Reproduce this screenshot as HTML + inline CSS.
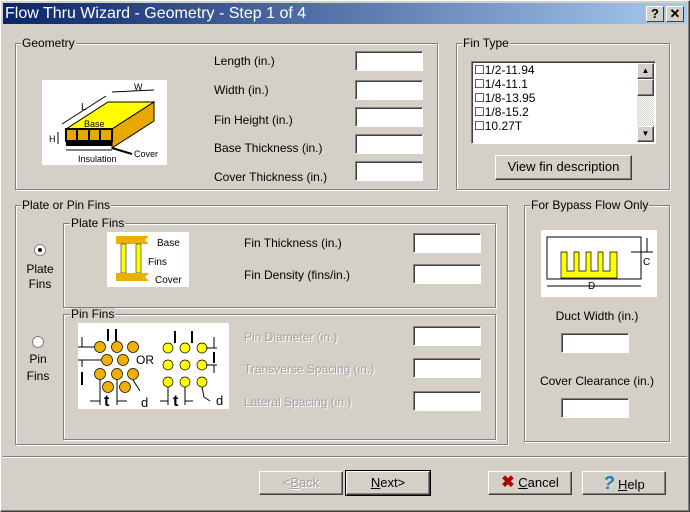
<!DOCTYPE html>
<html><head><meta charset="utf-8"><style>
*{box-sizing:border-box;margin:0;padding:0}
body{width:690px;height:512px;background:#d4d0c8;font-family:"Liberation Sans",sans-serif;font-size:12px;color:#000;position:relative;overflow:hidden}
.a{position:absolute}
.win{left:0;top:0;width:690px;height:512px;border:1px solid #fff;border-right-color:#404040;border-bottom-color:#404040;box-shadow:inset -1px -1px #808080}
.title{left:3px;top:3px;width:684px;height:21px;background:linear-gradient(90deg,#0a246a,#a6caf0);color:#fff;font-size:16px;line-height:21px;padding-left:2px}
.tb{top:6px;width:18px;height:16px;background:#d4d0c8;border:1px solid #fff;border-right-color:#404040;border-bottom-color:#404040;font-weight:bold;font-size:13px;text-align:center;line-height:14px;color:#000}
.grp{border:1px solid #808080;box-shadow:1px 1px 0 #fff,inset 1px 1px 0 #fff}
.lbl{background:#d4d0c8;padding:0 1px;line-height:13px}
.in{background:#fff;border:1px solid #808080;border-right-color:#fff;border-bottom-color:#fff;box-shadow:inset 1px 1px #404040}
.dis{color:#a0a0a0;text-shadow:1px 1px #fff}
.btn{border:1px solid #fff;border-right-color:#404040;border-bottom-color:#404040;box-shadow:inset -1px -1px #808080;text-align:center;line-height:22px;font-size:13px}
.white{background:#fff}
</style></head><body>
<div class="a win"></div>
<div class="a title">Flow Thru Wizard - Geometry - Step 1 of 4</div>
<div class="a tb" style="left:646px">?</div>
<div class="a tb" style="left:666px">✕</div>

<div class="a grp" style="left:15px;top:43px;width:423px;height:147px"></div>
<div class="a lbl" style="left:21px;top:37px">Geometry</div>
<div class="a white" style="left:42px;top:80px;width:125px;height:85px">
<svg width="125" height="85" viewBox="0 0 125 85">
<polygon points="24,49 66,22 112,22 70,49" fill="#ff0" stroke="#000"/>
<polygon points="70,49 112,22 112,41 70,68" fill="#e8a800" stroke="#000"/>
<rect x="24" y="49" width="46" height="12" fill="#e8a800" stroke="#000" stroke-width="2"/>
<rect x="24" y="61" width="46" height="5" fill="#000"/>
<line x1="35" y1="49" x2="35" y2="61" stroke="#000" stroke-width="2"/><line x1="47" y1="49" x2="47" y2="61" stroke="#000" stroke-width="2"/><line x1="58" y1="49" x2="58" y2="61" stroke="#000" stroke-width="2"/>
<line x1="20" y1="44" x2="64" y2="16" stroke="#000"/><line x1="70" y1="12" x2="112" y2="10" stroke="#000"/>
<text x="39" y="30" font-size="10" font-family="Liberation Sans">L</text>
<text x="92" y="10" font-size="9" font-family="Liberation Sans">W</text>
<text x="42" y="47" font-size="9" font-family="Liberation Sans">Base</text>
<text x="7" y="62" font-size="9" font-family="Liberation Sans">H</text>
<line x1="16" y1="52" x2="16" y2="64" stroke="#000"/>
<line x1="24" y1="70" x2="70" y2="70" stroke="#000"/>
<line x1="70" y1="68" x2="90" y2="74" stroke="#000" stroke-width="2"/>
<text x="92" y="77" font-size="9" font-family="Liberation Sans">Cover</text>
<text x="36" y="82" font-size="9" font-family="Liberation Sans">Insulation</text>
</svg></div>
<div class="a" style="left:214px;top:54px">Length (in.)</div>
<div class="a" style="left:214px;top:83px">Width (in.)</div>
<div class="a" style="left:214px;top:113px">Fin Height (in.)</div>
<div class="a" style="left:214px;top:141px">Base Thickness (in.)</div>
<div class="a" style="left:214px;top:170px">Cover Thickness (in.)</div>
<div class="a in" style="left:355px;top:51px;width:68px;height:20px"></div>
<div class="a in" style="left:355px;top:80px;width:68px;height:20px"></div>
<div class="a in" style="left:355px;top:107px;width:68px;height:20px"></div>
<div class="a in" style="left:355px;top:134px;width:68px;height:20px"></div>
<div class="a in" style="left:355px;top:161px;width:68px;height:20px"></div>

<div class="a grp" style="left:456px;top:43px;width:214px;height:147px"></div>
<div class="a lbl" style="left:462px;top:37px">Fin Type</div>
<div class="a in" style="left:471px;top:61px;width:185px;height:83px"></div>
<div class="a" style="left:474px;top:63px;line-height:14px;font-size:12px">
<div>☐1/2-11.94</div><div>☐1/4-11.1</div><div>☐1/8-13.95</div><div>☐1/8-15.2</div><div>☐10.27T</div></div>
<div class="a" style="left:637px;top:63px;width:17px;height:79px;background:repeating-conic-gradient(#fff 0 25%,#d4d0c8 0 50%) 0 0/2px 2px"></div>
<div class="a btn" style="left:637px;top:63px;width:17px;height:16px;background:#d4d0c8;font-size:8px;line-height:14px">▲</div>
<div class="a btn" style="left:637px;top:79px;width:17px;height:17px;background:#d4d0c8"></div>
<div class="a btn" style="left:637px;top:126px;width:17px;height:16px;background:#d4d0c8;font-size:8px;line-height:14px">▼</div>
<div class="a btn" style="left:495px;top:155px;width:137px;height:25px">View fin description</div>

<div class="a grp" style="left:15px;top:205px;width:493px;height:240px"></div>
<div class="a lbl" style="left:21px;top:199px">Plate or Pin Fins</div>
<div class="a" style="left:34px;top:244px;width:12px;height:12px;border-radius:50%;background:#fff;border:1px solid #808080"><div class="a" style="left:3px;top:3px;width:4px;height:4px;background:#000;border-radius:50%"></div></div>
<div class="a" style="left:22px;top:262px;width:36px;text-align:center;line-height:15px">Plate<br>Fins</div>
<div class="a" style="left:32px;top:336px;width:12px;height:12px;border-radius:50%;background:#fff;border:1px solid #808080"></div>
<div class="a" style="left:20px;top:351px;width:36px;text-align:center;line-height:17px">Pin<br>Fins</div>

<div class="a grp" style="left:63px;top:223px;width:433px;height:85px"></div>
<div class="a lbl" style="left:70px;top:217px">Plate Fins</div>
<div class="a white" style="left:107px;top:232px;width:82px;height:55px">
<svg width="82" height="55"><polygon points="9,4 42,4 38,8 42,12 9,12" fill="#e8b000"/><rect x="14" y="12" width="5" height="29" fill="#ff0" stroke="#000" stroke-width=".5"/><rect x="29" y="12" width="5" height="29" fill="#ff0" stroke="#000" stroke-width=".5"/><polygon points="9,41 42,41 38,45 42,49 9,49" fill="#e8b000"/>
<text x="50" y="14" font-size="10" font-family="Liberation Sans">Base</text><text x="41" y="33" font-size="10" font-family="Liberation Sans">Fins</text><text x="48" y="51" font-size="10" font-family="Liberation Sans">Cover</text></svg></div>
<div class="a" style="left:244px;top:236px">Fin Thickness (in.)</div>
<div class="a" style="left:244px;top:268px">Fin Density (fins/in.)</div>
<div class="a in" style="left:413px;top:233px;width:68px;height:20px"></div>
<div class="a in" style="left:413px;top:264px;width:68px;height:20px"></div>

<div class="a grp" style="left:63px;top:314px;width:433px;height:126px"></div>
<div class="a lbl" style="left:70px;top:308px">Pin Fins</div>
<div class="a white" style="left:78px;top:323px;width:151px;height:86px">
<svg width="151" height="86" font-family="Liberation Sans">
<g fill="#f0b000" stroke="#000" stroke-width=".7">
<circle cx="22" cy="24" r="5.5"/><circle cx="39" cy="24" r="5.5"/><circle cx="55" cy="24" r="5.5"/>
<circle cx="29" cy="37" r="5.5"/><circle cx="45" cy="37" r="5.5"/>
<circle cx="22" cy="51" r="5.5"/><circle cx="39" cy="51" r="5.5"/><circle cx="55" cy="51" r="5.5"/>
<circle cx="30" cy="64" r="5.5"/><circle cx="47" cy="64" r="5.5"/></g>
<g fill="#ff0" stroke="#000" stroke-width=".7">
<circle cx="90" cy="25" r="5"/><circle cx="107" cy="25" r="5"/><circle cx="124" cy="25" r="5"/>
<circle cx="90" cy="42" r="5"/><circle cx="107" cy="42" r="5"/><circle cx="124" cy="42" r="5"/>
<circle cx="90" cy="59" r="5"/><circle cx="107" cy="59" r="5"/><circle cx="124" cy="59" r="5"/></g>
<g stroke="#000" fill="none">
<line x1="30" y1="6" x2="30" y2="18" stroke-width="2"/><line x1="38" y1="6" x2="38" y2="18" stroke-width="2"/>
<line x1="-1" y1="24" x2="16" y2="24"/><line x1="-1" y1="37" x2="23" y2="37"/>
<line x1="4" y1="14" x2="4" y2="24"/><line x1="4" y1="37" x2="4" y2="44"/>
<line x1="4" y1="49" x2="4" y2="62" stroke-width="2"/>
<line x1="22" y1="56" x2="22" y2="82"/><line x1="39" y1="56" x2="39" y2="82"/>
<line x1="12" y1="78" x2="22" y2="78"/><line x1="39" y1="78" x2="49" y2="78"/>
<line x1="55" y1="57" x2="62" y2="68"/>
<line x1="97" y1="8" x2="97" y2="20" stroke-width="2"/><line x1="114" y1="8" x2="114" y2="20" stroke-width="2"/>
<line x1="128" y1="25" x2="139" y2="25"/><line x1="128" y1="42" x2="139" y2="42"/>
<line x1="136" y1="14" x2="136" y2="25"/><line x1="136" y1="29" x2="136" y2="40" stroke-width="2"/><line x1="136" y1="42" x2="136" y2="50"/>
<line x1="90" y1="64" x2="90" y2="82"/><line x1="107" y1="64" x2="107" y2="82"/>
<line x1="82" y1="78" x2="90" y2="78"/><line x1="107" y1="78" x2="115" y2="78"/>
<path d="M124 64 L126 74 L132 78"/></g>
<text x="58" y="41" font-size="12">OR</text><text x="26" y="83" font-size="16" font-weight="bold">t</text><text x="95" y="83" font-size="16" font-weight="bold">t</text><text x="63" y="84" font-size="13">d</text><text x="138" y="82" font-size="13">d</text></svg></div>
<div class="a dis" style="left:244px;top:330px">Pin Diameter (in.)</div>
<div class="a dis" style="left:244px;top:362px">Transverse Spacing (in.)</div>
<div class="a dis" style="left:244px;top:395px">Lateral Spacing (in.)</div>
<div class="a in" style="left:413px;top:326px;width:68px;height:20px"></div>
<div class="a in" style="left:413px;top:358px;width:68px;height:20px"></div>
<div class="a in" style="left:413px;top:391px;width:68px;height:20px"></div>

<div class="a grp" style="left:524px;top:205px;width:146px;height:237px"></div>
<div class="a lbl" style="left:530px;top:199px">For Bypass Flow Only</div>
<div class="a white" style="left:541px;top:230px;width:116px;height:67px">
<svg width="116" height="67" font-family="Liberation Sans">
<rect x="6" y="7" width="94" height="42" fill="none" stroke="#000"/>
<path d="M20 22 H26 V41 H33 V22 H38 V41 H45 V22 H50 V41 H57 V22 H62 V41 H69 V22 H76 V48 H20 Z" fill="#ff0" stroke="#000" stroke-width=".7"/>
<line x1="6" y1="56" x2="100" y2="56" stroke="#000"/><text x="47" y="59" font-size="10">D</text>
<line x1="106" y1="8" x2="106" y2="22" stroke="#000"/><line x1="90" y1="22" x2="112" y2="22" stroke="#000"/><text x="102" y="35" font-size="10">C</text></svg></div>
<div class="a" style="left:524px;top:309px;width:146px;text-align:center">Duct Width (in.)</div>
<div class="a in" style="left:561px;top:333px;width:68px;height:20px"></div>
<div class="a" style="left:524px;top:374px;width:146px;text-align:center">Cover Clearance (in.)</div>
<div class="a in" style="left:561px;top:398px;width:68px;height:20px"></div>

<div class="a" style="left:3px;top:456px;width:684px;height:2px;border-top:1px solid #808080;border-bottom:1px solid #fff"></div>

<div class="a btn dis" style="left:259px;top:471px;width:84px;height:24px">&lt;<u>B</u>ack</div>
<div class="a btn" style="left:346px;top:471px;width:84px;height:24px;outline:1px solid #000"><u>N</u>ext&gt;</div>
<div class="a btn" style="left:488px;top:471px;width:84px;height:24px"><span style="color:#b00000;font-weight:bold;font-size:16px">✖</span> <u>C</u>ancel</div>
<div class="a btn" style="left:582px;top:471px;width:84px;height:24px"><span style="color:#1080c0;font-weight:bold;font-style:italic;font-size:18px">?</span> <u>H</u>elp</div>
</body></html>
